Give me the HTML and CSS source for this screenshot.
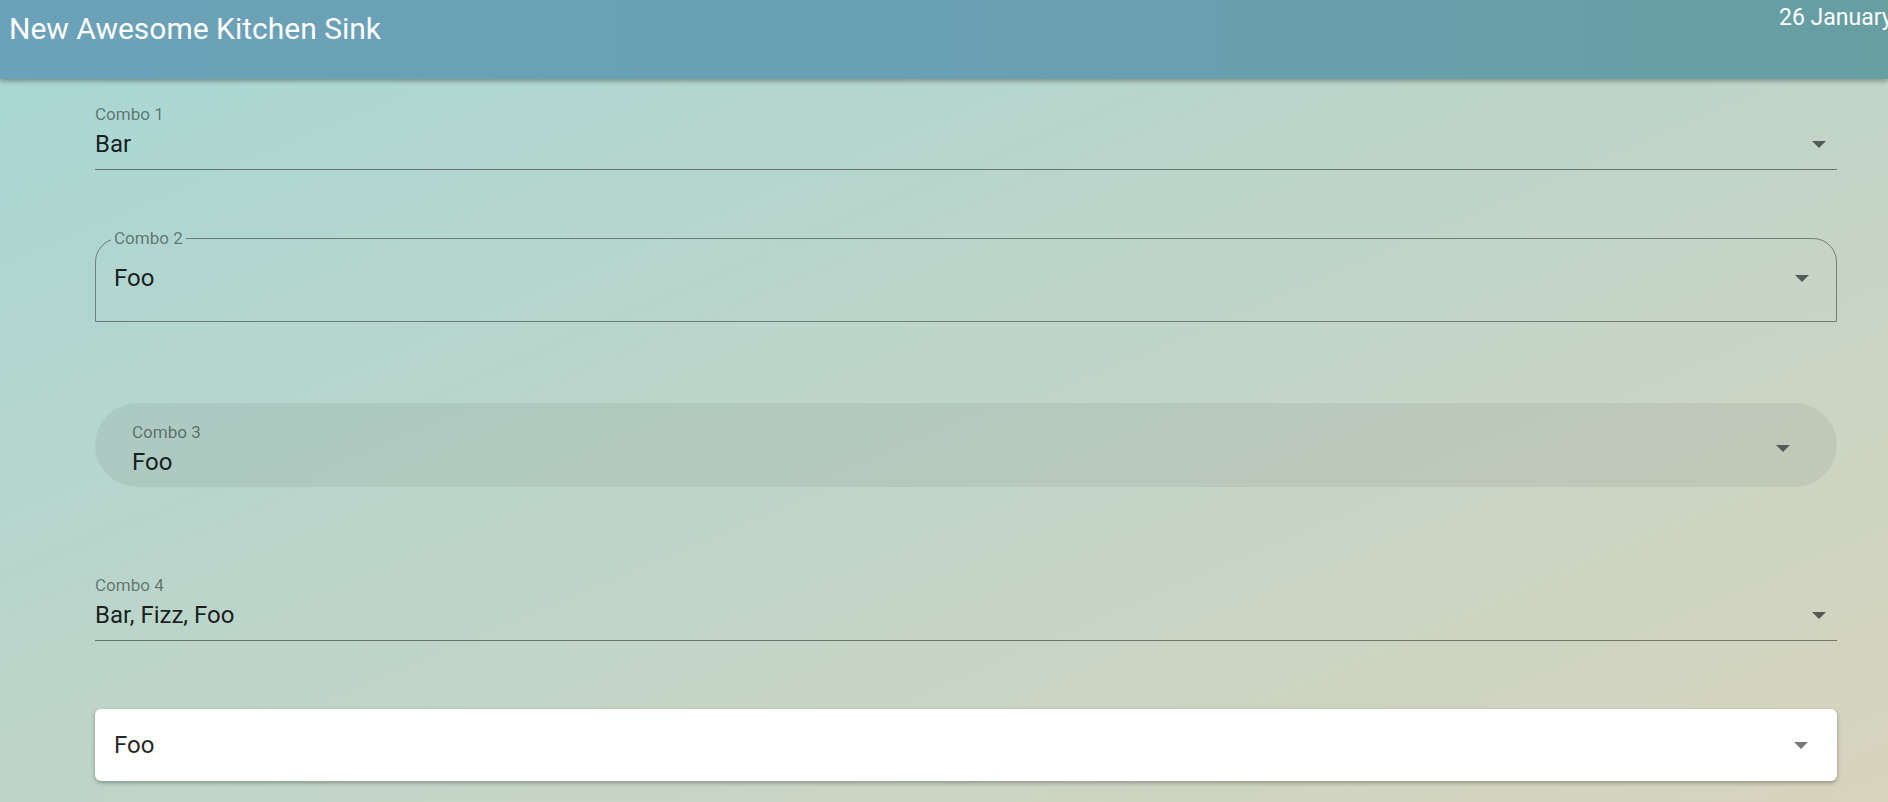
FILE: index.html
```html
<!DOCTYPE html>
<html lang="en">
<head>
  <meta charset="UTF-8" />
  <title>New Awesome Kitchen Sink</title>
  <link rel="stylesheet" href="styles.css">
</head>
<body>

  <header class="topbar">
    <h1 class="title">New Awesome Kitchen Sink</h1>
    <span class="date">26 January 2025</span>
  </header>

  <main class="form">

    <!-- Combo 1: standard -->
    <div class="field field-line">
      <label class="label">Combo 1</label>
      <div class="value-row">
        <span class="value">Bar</span>
        <span class="arrow"></span>
      </div>
    </div>

    <!-- Combo 2: outlined -->
    <fieldset class="field field-outlined">
      <legend class="label">Combo 2</legend>
      <div class="value-row">
        <span class="value">Foo</span>
        <span class="arrow"></span>
      </div>
    </fieldset>

    <!-- Combo 3: filled pill -->
    <div class="field field-filled">
      <div class="stack">
        <label class="label">Combo 3</label>
        <span class="value">Foo</span>
      </div>
      <span class="arrow"></span>
    </div>

    <!-- Combo 4: multi select -->
    <div class="field field-line field-multi">
      <label class="label">Combo 4</label>
      <div class="value-row">
        <span class="value">Bar, Fizz, Foo</span>
        <span class="arrow"></span>
      </div>
    </div>

    <!-- Combo 5: solo -->
    <div class="field field-solo">
      <div class="value-row">
        <span class="value">Foo</span>
        <span class="arrow arrow-light"></span>
      </div>
    </div>

  </main>

</body>
</html>
```

FILE: styles.css
```css
html, body {
  margin: 0;
  height: 100%;
  overflow: hidden;
}
body {
  font-family: Roboto, "Noto Sans", sans-serif;
  background: linear-gradient(to bottom right, #a7d7d4, #bfd5c9 50%, #d8d4bd);
  color: rgba(0, 0, 0, 0.87);
}

.topbar {
  display: flex;
  align-items: flex-start;
  height: 79px;
  padding-left: 9px;
  background: linear-gradient(to right, #6ba2b9, #6aa0b3 50%, #679ea2);
  box-shadow: 0 2px 5px rgba(0, 0, 0, 0.35);
  color: white;
  position: relative;
  z-index: 1;
}
.title {
  margin: 0;
  padding-top: 14px;
  font-size: 30px;
  font-weight: 400;
  line-height: 1;
  white-space: nowrap;
}
.date {
  margin-left: auto;
  flex: 0 0 109px;
  min-width: 0;
  padding-top: 6px;
  font-size: 23px;
  line-height: 1;
  white-space: nowrap;
}

.form {
  display: flex;
  flex-direction: column;
  padding: 26px 51px 0 95px;
}

.label {
  display: block;
  font-size: 17px;
  line-height: 18px;
  color: rgba(0, 0, 0, 0.48);
}
.value {
  font-size: 24px;
  line-height: 26px;
  white-space: nowrap;
}
.value-row {
  display: flex;
  align-items: center;
  justify-content: space-between;
}
.arrow {
  width: 0;
  height: 0;
  border-left: 7px solid transparent;
  border-right: 7px solid transparent;
  border-top: 7px solid #545a57;
}
.arrow-light {
  border-top-color: #787878;
}

/* underlined */
.field-line {
  padding: 0 11px 12px 0;
  border-bottom: 1px solid rgba(0, 0, 0, 0.45);
}
.field-line .value-row {
  margin-top: 8px;
}
.field-multi {
  margin-top: 89px;
}

/* outlined */
.field-outlined {
  margin: 59px 0 0;
  padding: 0 27px 30px 15px;
  min-width: 0;
  border: 1px solid rgba(0, 0, 0, 0.4);
  border-radius: 24px 24px 0 0;
}
.field-outlined .label {
  padding: 0 3px;
}
.field-outlined .value-row {
  margin-top: 18px;
  padding-left: 3px;
}

/* filled pill */
.field-filled {
  display: flex;
  align-items: center;
  justify-content: space-between;
  margin-top: 81px;
  height: 84px;
  box-sizing: border-box;
  padding: 7px 47px 0 37px;
  border-radius: 42px;
  background: rgba(0, 0, 0, 0.055);
}
.stack .value {
  display: block;
  margin-top: 8px;
}

/* solo card */
.field-solo {
  margin-top: 68px;
  padding: 23px 29px 23px 19px;
  background: white;
  border-radius: 6px;
  box-shadow: 0 2px 4px rgba(0, 0, 0, 0.3);
}
```
